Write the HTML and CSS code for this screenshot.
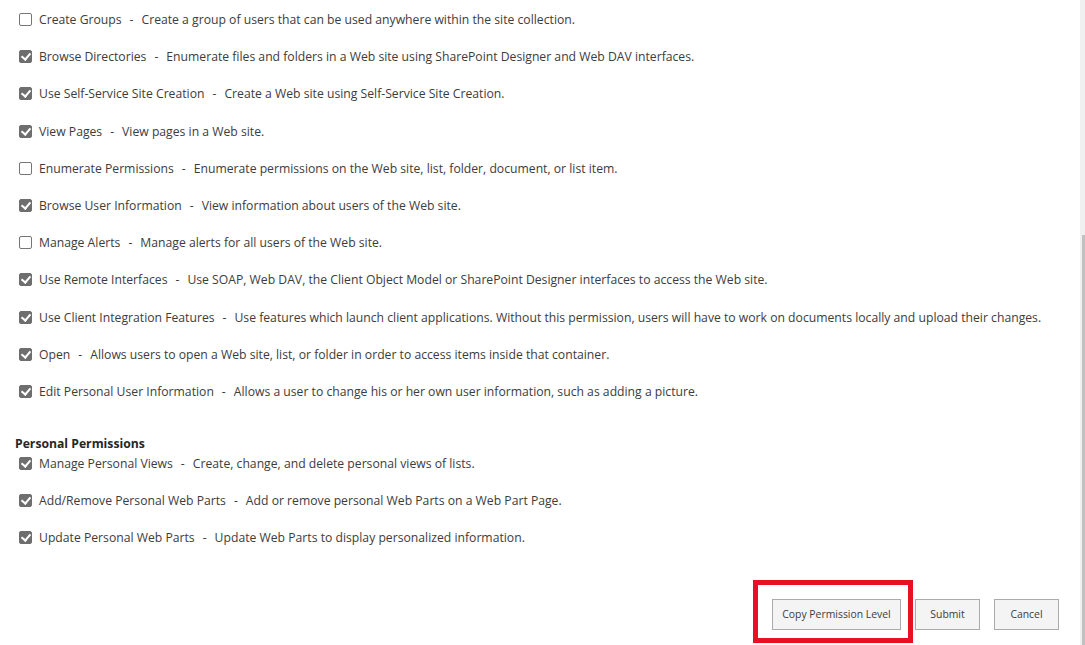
FILE: index.html
```html
<!DOCTYPE html>
<html lang="en">
  <head>
    <meta charset="UTF-8" />
    <title>Edit Permission Level</title>
    <link rel="stylesheet" href="styles.css">
  </head>
  <body>
    <div class="page">
      <ul class="perms">
        <li><span class="box"></span><span class="name">Create Groups</span><span class="dash">-</span><span class="desc">Create a group of users that can be used anywhere within the site collection.</span></li>
        <li><span class="box on"></span><span class="name">Browse Directories</span><span class="dash">-</span><span class="desc">Enumerate files and folders in a Web site using SharePoint Designer and Web DAV interfaces.</span></li>
        <li><span class="box on"></span><span class="name">Use Self-Service Site Creation</span><span class="dash">-</span><span class="desc">Create a Web site using Self-Service Site Creation.</span></li>
        <li><span class="box on"></span><span class="name">View Pages</span><span class="dash">-</span><span class="desc">View pages in a Web site.</span></li>
        <li><span class="box"></span><span class="name">Enumerate Permissions</span><span class="dash">-</span><span class="desc">Enumerate permissions on the Web site, list, folder, document, or list item.</span></li>
        <li><span class="box on"></span><span class="name">Browse User Information</span><span class="dash">-</span><span class="desc">View information about users of the Web site.</span></li>
        <li><span class="box"></span><span class="name">Manage Alerts</span><span class="dash">-</span><span class="desc">Manage alerts for all users of the Web site.</span></li>
        <li><span class="box on"></span><span class="name">Use Remote Interfaces</span><span class="dash">-</span><span class="desc">Use SOAP, Web DAV, the Client Object Model or SharePoint Designer interfaces to access the Web site.</span></li>
        <li><span class="box on"></span><span class="name">Use Client Integration Features</span><span class="dash">-</span><span class="desc">Use features which launch client applications. Without this permission, users will have to work on documents locally and upload their changes.</span></li>
        <li><span class="box on"></span><span class="name">Open</span><span class="dash">-</span><span class="desc">Allows users to open a Web site, list, or folder in order to access items inside that container.</span></li>
        <li><span class="box on"></span><span class="name">Edit Personal User Information</span><span class="dash">-</span><span class="desc">Allows a user to change his or her own user information, such as adding a picture.</span></li>
      </ul>

      <h3 class="group-title">Personal Permissions</h3>
      <ul class="perms">
        <li><span class="box on"></span><span class="name">Manage Personal Views</span><span class="dash">-</span><span class="desc">Create, change, and delete personal views of lists.</span></li>
        <li><span class="box on"></span><span class="name">Add/Remove Personal Web Parts</span><span class="dash">-</span><span class="desc">Add or remove personal Web Parts on a Web Part Page.</span></li>
        <li><span class="box on"></span><span class="name">Update Personal Web Parts</span><span class="dash">-</span><span class="desc">Update Web Parts to display personalized information.</span></li>
      </ul>

      <div class="actions">
        <div class="highlight-wrap">
          <button class="btn btn-copy">Copy Permission Level</button>
          <div class="highlight"></div>
        </div>
        <button class="btn">Submit</button>
        <button class="btn">Cancel</button>
      </div>
    </div>

    <div class="scrollbar"><div class="thumb"></div></div>
  </body>
</html>
```

FILE: styles.css
```css
* {
  box-sizing: border-box;
}

html,
body {
  height: 100%;
}

body {
  margin: 0;
  background: #ffffff;
  color: #3c3c3c;
  font-family: "Open Sans", "Noto Sans", sans-serif;
  font-size: 12.2px;
  overflow: hidden;
}

.page {
  padding: 1px 0 0 15px;
}

.perms {
  list-style: none;
  margin: 0;
  padding: 0;
}

.perms li {
  display: flex;
  align-items: center;
  height: 37.2px;
  white-space: nowrap;
}

.box {
  width: 13px;
  height: 13px;
  margin: 0 7px 0 4px;
  border: 1px solid #767676;
  border-radius: 2px;
  background: #ffffff;
  flex-shrink: 0;
  position: relative;
}

.box.on {
  background: #6e6e6e;
  border-color: #6e6e6e;
}

.box.on::after {
  content: "";
  position: absolute;
  left: 3px;
  top: 0px;
  width: 4px;
  height: 7px;
  border: solid #ffffff;
  border-width: 0 2px 2px 0;
  transform: rotate(40deg);
}

.dash {
  margin: 0 8px;
}

.group-title {
  margin: 26.4px 0 -7.6px 0;
  font-size: 12.2px;
  font-weight: bold;
  color: #262626;
  line-height: 16px;
}

.actions {
  display: flex;
  justify-content: flex-end;
  gap: 14px;
  margin: 42.4px 26px 0 0;
}

.highlight-wrap {
  position: relative;
  height: 31px;
}

.btn {
  height: 31px;
  min-width: 65px;
  padding: 0 8px;
  background: #f4f4f4;
  border: 1px solid #ababab;
  font-family: inherit;
  font-size: 10.4px;
  color: #3c3c3c;
  white-space: nowrap;
}

.btn-copy {
  width: 129px;
}

.highlight {
  position: absolute;
  left: -19px;
  top: -19px;
  width: 160px;
  height: 63px;
  border: 5px solid #e81123;
}

.scrollbar {
  position: fixed;
  top: 0;
  right: 0;
  width: 5px;
  height: 100%;
  background: #f0f0f0;
}

.thumb {
  margin: 235px 0 0 2px;
  height: 410px;
  background: #c1c1c1;
}
```
